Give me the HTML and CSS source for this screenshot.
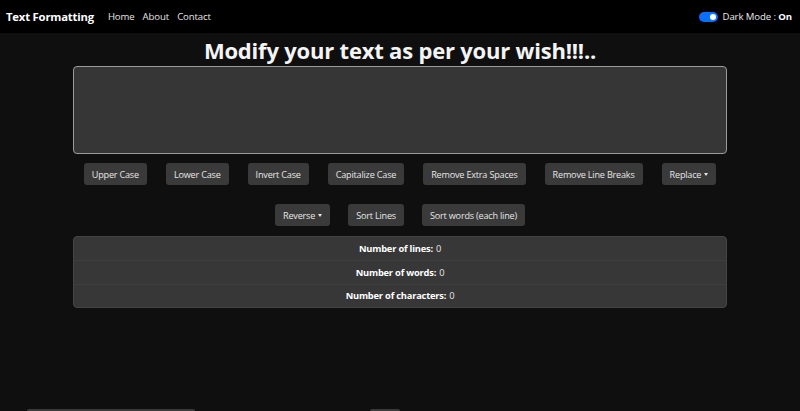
FILE: index.html
```html
<!DOCTYPE html>
<html lang="en">
<head>
<meta charset="utf-8">
<title>Text Formatting</title>
<link rel="stylesheet" href="styles.css">
</head>
<body>
<nav class="navbar">
  <div class="nav-left">
    <span class="brand">Text Formatting</span>
    <a class="nav-link" href="#">Home</a>
    <a class="nav-link" href="#">About</a>
    <a class="nav-link" href="#">Contact</a>
  </div>
  <div class="nav-right">
    <span class="switch"><span class="knob"></span></span>
    <span class="mode">Dark Mode : <b>On</b></span>
  </div>
</nav>
<main class="container">
  <h1 class="title">Modify your text as per your wish!!!..</h1>
  <textarea class="editor"></textarea>
  <div class="btn-row">
    <button class="btn">Upper Case</button>
    <button class="btn">Lower Case</button>
    <button class="btn">Invert Case</button>
    <button class="btn">Capitalize Case</button>
    <button class="btn">Remove Extra Spaces</button>
    <button class="btn">Remove Line Breaks</button>
    <button class="btn">Replace <span class="caret"></span></button>
  </div>
  <div class="btn-row second">
    <button class="btn">Reverse <span class="caret"></span></button>
    <button class="btn">Sort Lines</button>
    <button class="btn">Sort words (each line)</button>
  </div>
  <ul class="stats">
    <li><b>Number of lines:</b> 0</li>
    <li><b>Number of words:</b> 0</li>
    <li><b>Number of characters:</b> 0</li>
  </ul>
</main>
<div class="fold">
  <span class="fold-a"></span>
  <span class="fold-b"></span>
</div>
</body>
</html>
```
FILE: styles.css
```css
* { box-sizing: border-box; }
html, body { margin: 0; padding: 0; }
body {
  background: #0f0f0f;
  color: #e9e9e9;
  font-family: "Open Sans", "Noto Sans", "Liberation Sans", sans-serif;
  font-size: 10px;
  height: 411px;
  overflow: hidden;
  position: relative;
}
.navbar {
  height: 33px;
  background: #000;
  display: flex;
  align-items: center;
  justify-content: space-between;
  padding: 0 8px 0 6px;
}
.nav-left { display: flex; align-items: center; }
.brand {
  font-weight: 700;
  font-size: 11.3px;
  color: #fff;
  margin-right: 14px;
  letter-spacing: -0.2px;
}
.nav-link {
  color: #e6e6e6;
  text-decoration: none;
  font-size: 9.6px;
  margin-right: 8px;
  letter-spacing: -0.1px;
}
.nav-right { display: flex; align-items: center; gap: 5px; }
.switch {
  width: 19px;
  height: 10px;
  border-radius: 5px;
  background: #0d6efd;
  position: relative;
  display: inline-block;
}
.knob {
  position: absolute;
  right: 2px;
  top: 2px;
  width: 6px;
  height: 6px;
  border-radius: 50%;
  background: #fff;
}
.mode { font-size: 9.6px; color: #e9e9e9; letter-spacing: -0.1px; }
.mode b { color: #fff; }
.container {
  width: 654px;
  margin: 0 auto;
  display: flex;
  flex-direction: column;
  align-items: center;
}
.title {
  margin: 3px 0 2px;
  font-size: 22px;
  font-weight: 700;
  color: #f4f4f4;
  line-height: 28px;
  letter-spacing: -0.2px;
}
.editor {
  width: 654px;
  height: 88px;
  background: #363636;
  border: 1px solid #9c9c9c;
  border-radius: 4px;
  resize: none;
  margin: 0;
  display: block;
}
.btn-row {
  display: flex;
  justify-content: center;
  gap: 19px;
  margin-top: 9px;
}
.btn-row.second { gap: 18px; margin-top: 19px; }
.btn {
  background: #3a3a3a;
  color: #e6e6e6;
  border: none;
  border-radius: 3px;
  height: 22px;
  padding: 0 8px;
  font-family: inherit;
  font-size: 9.1px;
  display: inline-flex;
  align-items: center;
  gap: 3px;
  letter-spacing: -0.2px;
}
.caret {
  width: 0;
  height: 0;
  border-left: 2.5px solid transparent;
  border-right: 2.5px solid transparent;
  border-top: 3px solid #e6e6e6;
}
.stats {
  list-style: none;
  margin: 10px 0 0;
  padding: 0;
  width: 654px;
  background: #373737;
  border: 1px solid #444;
  border-radius: 4px;
}
.stats li {
  height: 23.3px;
  display: flex;
  align-items: center;
  justify-content: center;
  gap: 3px;
  font-size: 9.3px;
  color: #e6e6e6;
  border-top: 1px solid #3e3e3e;
  letter-spacing: -0.2px;
}
.stats li:first-child { border-top: none; }
.stats li b { color: #fff; }
.fold {
  position: absolute;
  left: 0;
  right: 0;
  bottom: 0;
  height: 2px;
}
.fold-a, .fold-b {
  position: absolute;
  top: 0;
  height: 2px;
  background: #3a3a3a;
  border-radius: 2px 2px 0 0;
}
.fold-a { left: 27px; width: 168px; }
.fold-b { left: 370px; width: 30px; }
```
